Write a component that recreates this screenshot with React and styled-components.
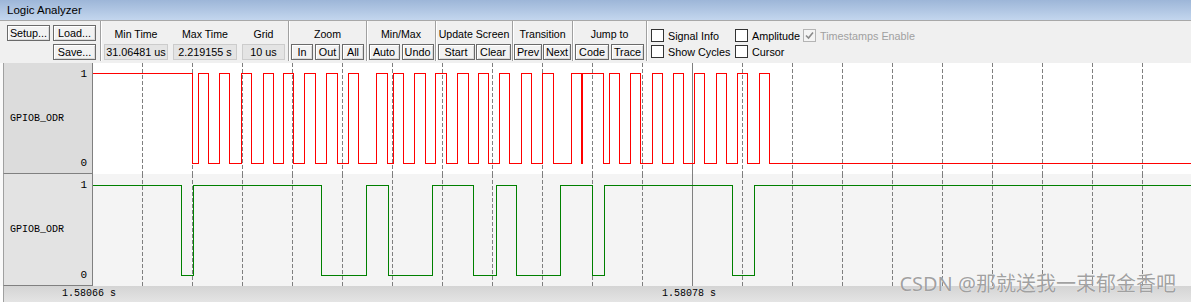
import React from "react";
import styled, {createGlobalStyle} from "styled-components";

const GlobalStyle = createGlobalStyle`
  html, body {
    margin: 0;
    padding: 0;
    background: #fff;
    overflow: hidden;
  }
  body {
    font-family: "Liberation Sans", Arial, sans-serif;
  }
`;

const PLOT_LEFT = 93;
const PLOT_W = 1191 - PLOT_LEFT;

// edge positions (page x) of each signal, starting high
const redEdges = [
    192, 198, 208, 219, 229, 241, 251, 263, 273, 283, 293, 304, 315, 326, 337, 348, 358, 376,
    387, 393, 403, 414, 425, 435, 446, 457, 468, 478, 488, 499, 509, 521, 531, 542, 553, 571,
    581, 582, 603, 609, 619, 630, 640, 652, 662, 673, 683, 694, 704, 716, 726, 737, 747, 759, 769
];
const greenEdges = [181, 193, 321, 366, 388, 432, 473, 496, 516, 560, 592, 604, 732, 754];

const gridLines = Array.from({length: 21}, (_, i) => 142 + i * 50 - PLOT_LEFT + 0.5);
const cursorX = 692 - PLOT_LEFT + 0.5;

function wavePath(edges, hi, lo) {
    let y = hi;
    let d = `M0 ${y}`;
    edges.forEach((gx) => {
        const x = gx - PLOT_LEFT + 0.5;
        y = y === hi ? lo : hi;
        d += ` H${x} V${y}`;
    });
    return d + ` H${PLOT_W}`;
}

const channels = [
    {name: "GPIOB_ODR", edges: redEdges, color: "#ff0000", h: 111, hi: 10.5, lo: 100.5, bg: "#ffffff", panel: "#dcdcdc"},
    {name: "GPIOB_ODR", edges: greenEdges, color: "#008000", h: 112, hi: 11.5, lo: 101.5, bg: "#f4f4f4", panel: "#e3e3e3"},
];

const axisLabels = [
    {x: 62, text: "1.58066 s"},
    {x: 662, text: "1.58078 s"},
];

function Button({w, children}) {
    return <Btn $w={w}>{children}</Btn>;
}

function Check({label, checked, disabled}) {
    return (
        <CheckItem $disabled={disabled}>
            <Box $disabled={disabled}>
                {checked && (
                    <svg width="11" height="11" viewBox="0 0 11 11">
                        <polyline points="2,5.5 4.5,8 9,2.5" fill="none" stroke="#8a8a8a" strokeWidth="1.6"/>
                    </svg>
                )}
            </Box>
            {label}
        </CheckItem>
    );
}

function Plot({ch}) {
    return (
        <PlotArea $bg={ch.bg}>
            <svg width={PLOT_W} height={ch.h} shapeRendering="crispEdges">
                {gridLines.map((x) => (
                    <line key={x} x1={x} y1="0" x2={x} y2={ch.h} stroke="#7f7f7f" strokeDasharray="4 2"/>
                ))}
                <line x1={cursorX} y1="0" x2={cursorX} y2={ch.h} stroke="#808080"/>
                <path d={wavePath(ch.edges, ch.hi, ch.lo)} fill="none" stroke={ch.color} strokeWidth="1"/>
            </svg>
        </PlotArea>
    );
}

export default function App() {
    return (
        <Window>
            <GlobalStyle/>
            <TitleBar>Logic Analyzer</TitleBar>
            <Toolbar>
                <FileGroup>
                    <Button w={43}>Setup...</Button>
                    <Button w={43}>Load...</Button>
                    <SaveSlot><Button w={43}>Save...</Button></SaveSlot>
                </FileGroup>

                <Group $w={188} $sep>
                    <Fields>
                        <Field>
                            <GroupLabel>Min Time</GroupLabel>
                            <ValueBox $w={64}>31.06481 us</ValueBox>
                        </Field>
                        <Field>
                            <GroupLabel>Max Time</GroupLabel>
                            <ValueBox $w={64}>2.219155 s</ValueBox>
                        </Field>
                        <Field>
                            <GroupLabel>Grid</GroupLabel>
                            <ValueBox $w={43}>10 us</ValueBox>
                        </Field>
                    </Fields>
                </Group>

                <Group $w={78} $sep>
                    <GroupLabel>Zoom</GroupLabel>
                    <ButtonRow $gap={2}>
                        <Button w={22}>In</Button>
                        <Button w={25}>Out</Button>
                        <Button w={22}>All</Button>
                    </ButtonRow>
                </Group>

                <Group $w={69} $sep>
                    <GroupLabel>Min/Max</GroupLabel>
                    <ButtonRow $gap={2}>
                        <Button w={31}>Auto</Button>
                        <Button w={32}>Undo</Button>
                    </ButtonRow>
                </Group>

                <Group $w={77} $sep>
                    <GroupLabel>Update Screen</GroupLabel>
                    <ButtonRow $gap={1}>
                        <Button w={37}>Start</Button>
                        <Button w={35}>Clear</Button>
                    </ButtonRow>
                </Group>

                <Group $w={60} $sep>
                    <GroupLabel>Transition</GroupLabel>
                    <ButtonRow $gap={1}>
                        <Button w={28}>Prev</Button>
                        <Button w={28}>Next</Button>
                    </ButtonRow>
                </Group>

                <Group $w={74} $sep>
                    <GroupLabel>Jump to</GroupLabel>
                    <ButtonRow $gap={2}>
                        <Button w={34}>Code</Button>
                        <Button w={33}>Trace</Button>
                    </ButtonRow>
                </Group>

                <CheckGroup>
                    <Check label="Signal Info"/>
                    <Check label="Amplitude"/>
                    <Check label="Timestamps Enable" checked disabled/>
                    <Check label="Show Cycles"/>
                    <Check label="Cursor"/>
                </CheckGroup>
            </Toolbar>

            <TopStrip/>
            {channels.map((ch, i) => (
                <ChannelRow key={i} $h={ch.h}>
                    <LabelCell $bg={ch.panel}>
                        <Level>1</Level>
                        <SignalName>{ch.name}</SignalName>
                        <Level>0</Level>
                    </LabelCell>
                    <Plot ch={ch}/>
                </ChannelRow>
            ))}
            <Axis>
                {axisLabels.map((a) => (
                    <AxisLabel key={a.text} style={{left: a.x - 4}}>{a.text}</AxisLabel>
                ))}
            </Axis>

            <Watermark>CSDN @那就送我一束郁金香吧</Watermark>
        </Window>
    );
}

const Window = styled.div`
  position: relative;
  width: 1191px;
  height: 302px;
  overflow: hidden;
  background: #fff;
`;

const TitleBar = styled.div`
  height: 20px;
  line-height: 20px;
  padding-left: 7px;
  font-size: 11.5px;
  color: #000;
  background: linear-gradient(#9db6d8, #c3d6ee);
`;

const Toolbar = styled.div`
  display: flex;
  height: 41px;
  box-sizing: border-box;
  background: #f0f0f0;
  border-top: 1px solid #a8a8a8;
  font-size: 10.6px;
  color: #000;
`;

const Group = styled.div`
  width: ${p => p.$w}px;
  flex: none;
  box-sizing: border-box;
  display: flex;
  flex-direction: column;
  align-items: center;
  padding-top: 3px;
  ${p => p.$sep && `
    border-left: 1px solid #a0a0a0;
    box-shadow: inset 1px 0 #ffffff;
  `}
`;

const FileGroup = styled.div`
  width: 100px;
  flex: none;
  box-sizing: border-box;
  display: grid;
  grid-template-columns: 43px 43px;
  grid-template-rows: 16px 16px;
  gap: 3px;
  padding: 4px 0 0 7px;
`;

const SaveSlot = styled.div`
  grid-column: 2;
`;

const GroupLabel = styled.div`
  height: 20px;
  line-height: 21px;
  white-space: nowrap;
  text-align: center;
`;

const ButtonRow = styled.div`
  display: flex;
  gap: ${p => p.$gap}px;
`;

const Btn = styled.button`
  width: ${p => p.$w}px;
  height: 16px;
  box-sizing: border-box;
  margin: 0;
  padding: 0;
  font-family: "Liberation Sans", Arial, sans-serif;
  font-size: 10.8px;
  line-height: 14px;
  color: #000;
  white-space: nowrap;
  background: #f2f2f2;
  border: 1px solid #6a6a6a;
  box-shadow: inset 1px 1px #ffffff, inset -1px -1px #dadada;
  border-radius: 0;
`;

const Fields = styled.div`
  display: flex;
  gap: 5px;
  align-self: flex-start;
  padding-left: 3px;
`;

const Field = styled.div`
  display: flex;
  flex-direction: column;
  align-items: center;
`;

const ValueBox = styled.div`
  width: ${p => p.$w}px;
  height: 16px;
  box-sizing: border-box;
  line-height: 14px;
  text-align: center;
  white-space: nowrap;
  font-size: 10.8px;
  background: #e4e4e4;
  border: 1px solid #cccccc;
`;

const CheckGroup = styled.div`
  flex: 1;
  display: grid;
  grid-template-columns: 84px 68px auto;
  grid-template-rows: 13px 13px;
  row-gap: 3px;
  align-content: start;
  padding: 8px 0 0 4px;
  border-left: 1px solid #a0a0a0;
  box-shadow: inset 1px 0 #ffffff;
`;

const CheckItem = styled.div`
  display: flex;
  align-items: center;
  gap: 4px;
  white-space: nowrap;
  font-size: 10.8px;
  color: ${p => (p.$disabled ? "#a0a0a0" : "#000")};
`;

const Box = styled.span`
  width: 13px;
  height: 13px;
  box-sizing: border-box;
  flex: none;
  display: flex;
  align-items: center;
  justify-content: center;
  background: ${p => (p.$disabled ? "#f4f4f4" : "#ffffff")};
  border: 1px solid ${p => (p.$disabled ? "#b4b4b4" : "#333333")};
`;

const TopStrip = styled.div`
  height: 2px;
  background: #f0f0f0;
`;

const ChannelRow = styled.div`
  display: flex;
  height: ${p => p.$h}px;
  background: #fafafa;
`;

const LabelCell = styled.div`
  width: 90px;
  flex: none;
  margin-left: 3px;
  box-sizing: border-box;
  display: flex;
  flex-direction: column;
  justify-content: space-between;
  padding: 5px 5px 4px 6px;
  background: ${p => p.$bg};
  border-left: 1px solid #a0a0a0;
  border-right: 1px solid #808080;
  border-bottom: 1px solid #808080;
  font-family: "Liberation Mono", "DejaVu Sans Mono", monospace;
  font-size: 10px;
  color: #000;
`;

const Level = styled.div`
  text-align: right;
  line-height: 12px;
  font-size: 11px;
`;

const SignalName = styled.div`
  line-height: 12px;
`;

const PlotArea = styled.div`
  flex: 1;
  background: ${p => p.$bg};

  svg {
    display: block;
  }
`;

const Axis = styled.div`
  position: relative;
  height: 16px;
  margin-left: 3px;
  box-sizing: border-box;
  border-left: 1px solid #a0a0a0;
  background: linear-gradient(#d4d4d4, #e4e4e4);
`;

const AxisLabel = styled.span`
  position: absolute;
  top: 1px;
  line-height: 14px;
  font-family: "Liberation Mono", "DejaVu Sans Mono", monospace;
  font-size: 10px;
  color: #000;
  white-space: nowrap;
`;

const Watermark = styled.div`
  position: absolute;
  right: 15px;
  top: 271px;
  font-family: "Noto Sans", "Noto Sans CJK SC", sans-serif;
  font-size: 20px;
  line-height: 26px;
  color: rgba(120, 120, 120, 0.7);
  text-shadow: 0 0 1px #fff;
  white-space: nowrap;
  pointer-events: none;
`;
